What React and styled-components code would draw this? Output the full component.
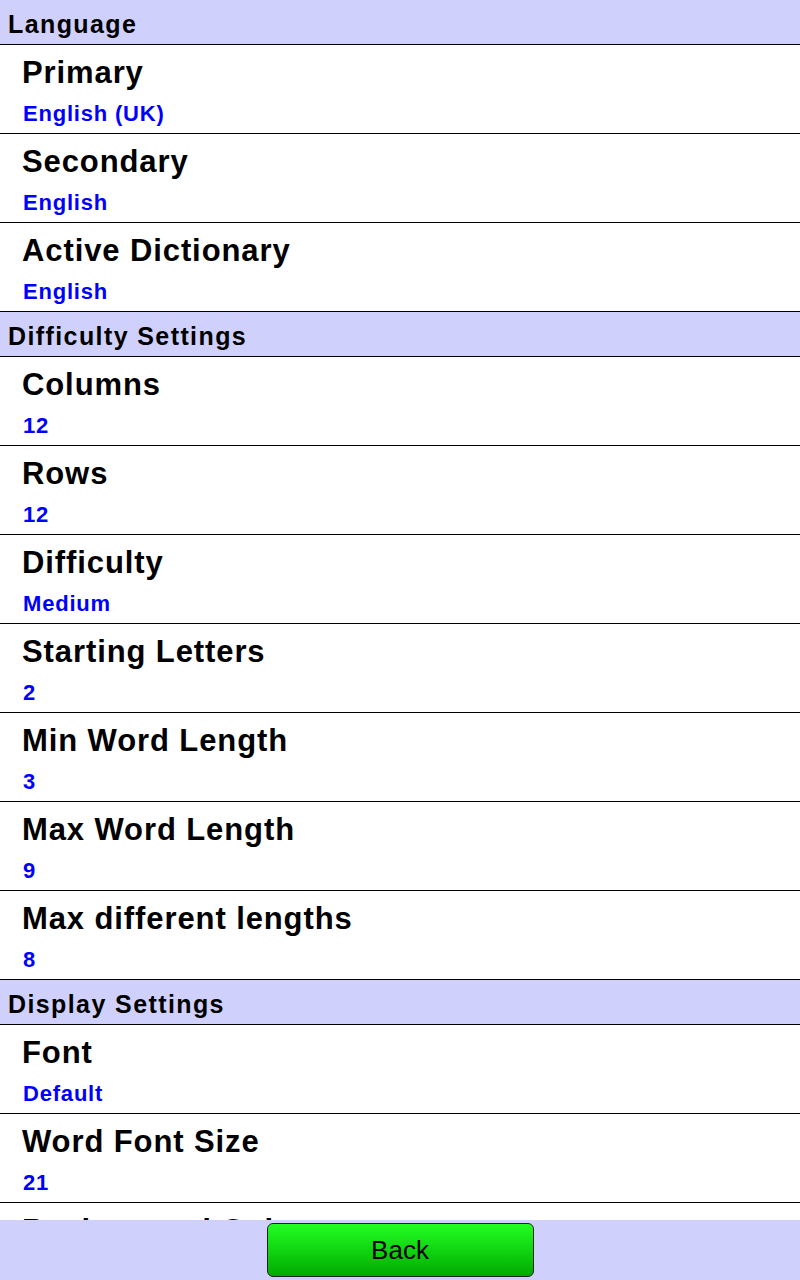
import styled, { createGlobalStyle } from "styled-components";

const sections = [
  {
    title: "Language",
    items: [
      { label: "Primary", value: "English (UK)" },
      { label: "Secondary", value: "English" },
      { label: "Active Dictionary", value: "English" },
    ],
  },
  {
    title: "Difficulty Settings",
    items: [
      { label: "Columns", value: "12" },
      { label: "Rows", value: "12" },
      { label: "Difficulty", value: "Medium" },
      { label: "Starting Letters", value: "2" },
      { label: "Min Word Length", value: "3" },
      { label: "Max Word Length", value: "9" },
      { label: "Max different lengths", value: "8" },
    ],
  },
  {
    title: "Display Settings",
    items: [
      { label: "Font", value: "Default" },
      { label: "Word Font Size", value: "21" },
      { label: "Background Color", value: "White" },
    ],
  },
];

export default function App() {
  return (
    <>
      <GlobalStyle />
      <Screen>
        <List>
          {sections.map((s) => (
            <section key={s.title}>
              <SectionHeader>{s.title}</SectionHeader>
              {s.items.map((it) => (
                <Row key={it.label}>
                  <Label>{it.label}</Label>
                  <Value>{it.value}</Value>
                </Row>
              ))}
            </section>
          ))}
        </List>
        <Footer>
          <BackButton>Back</BackButton>
        </Footer>
      </Screen>
    </>
  );
}

const GlobalStyle = createGlobalStyle`
  html, body {
    margin: 0;
    padding: 0;
    background: #ffffff;
    font-family: "Liberation Sans", Arial, sans-serif;
  }
`;

const Screen = styled.div`
  display: flex;
  flex-direction: column;
  width: 800px;
  height: 1280px;
  overflow: hidden;
`;

const List = styled.div`
  flex: 1;
  overflow: hidden;
`;

const SectionHeader = styled.div`
  height: 35px;
  padding: 9px 0 0 8px;
  background: #d0d0fc;
  border-bottom: 1px solid #000;
  font-size: 25px;
  font-weight: 700;
  letter-spacing: 1.4px;
  line-height: 30px;
  color: #000;
`;

const Row = styled.div`
  display: flex;
  flex-direction: column;
  height: 88px;
  padding-left: 22px;
  border-bottom: 1px solid #000;
`;

const Label = styled.div`
  margin-top: 10px;
  font-size: 31px;
  font-weight: 700;
  letter-spacing: 0.9px;
  line-height: 36px;
  color: #000;
`;

const Value = styled.div`
  margin-top: 10px;
  padding-left: 1px;
  font-size: 22px;
  font-weight: 700;
  letter-spacing: 0.8px;
  line-height: 26px;
  color: #0000ff;
`;

const Footer = styled.div`
  display: flex;
  justify-content: center;
  align-items: center;
  height: 60px;
  background: #d0d0fc;
`;

const BackButton = styled.button`
  width: 267px;
  height: 54px;
  border: 1px solid #222;
  border-radius: 6px;
  background: linear-gradient(#22ff22, #00aa00);
  font-family: "Liberation Sans", Arial, sans-serif;
  font-size: 26px;
  color: #000;
  cursor: pointer;
`;
